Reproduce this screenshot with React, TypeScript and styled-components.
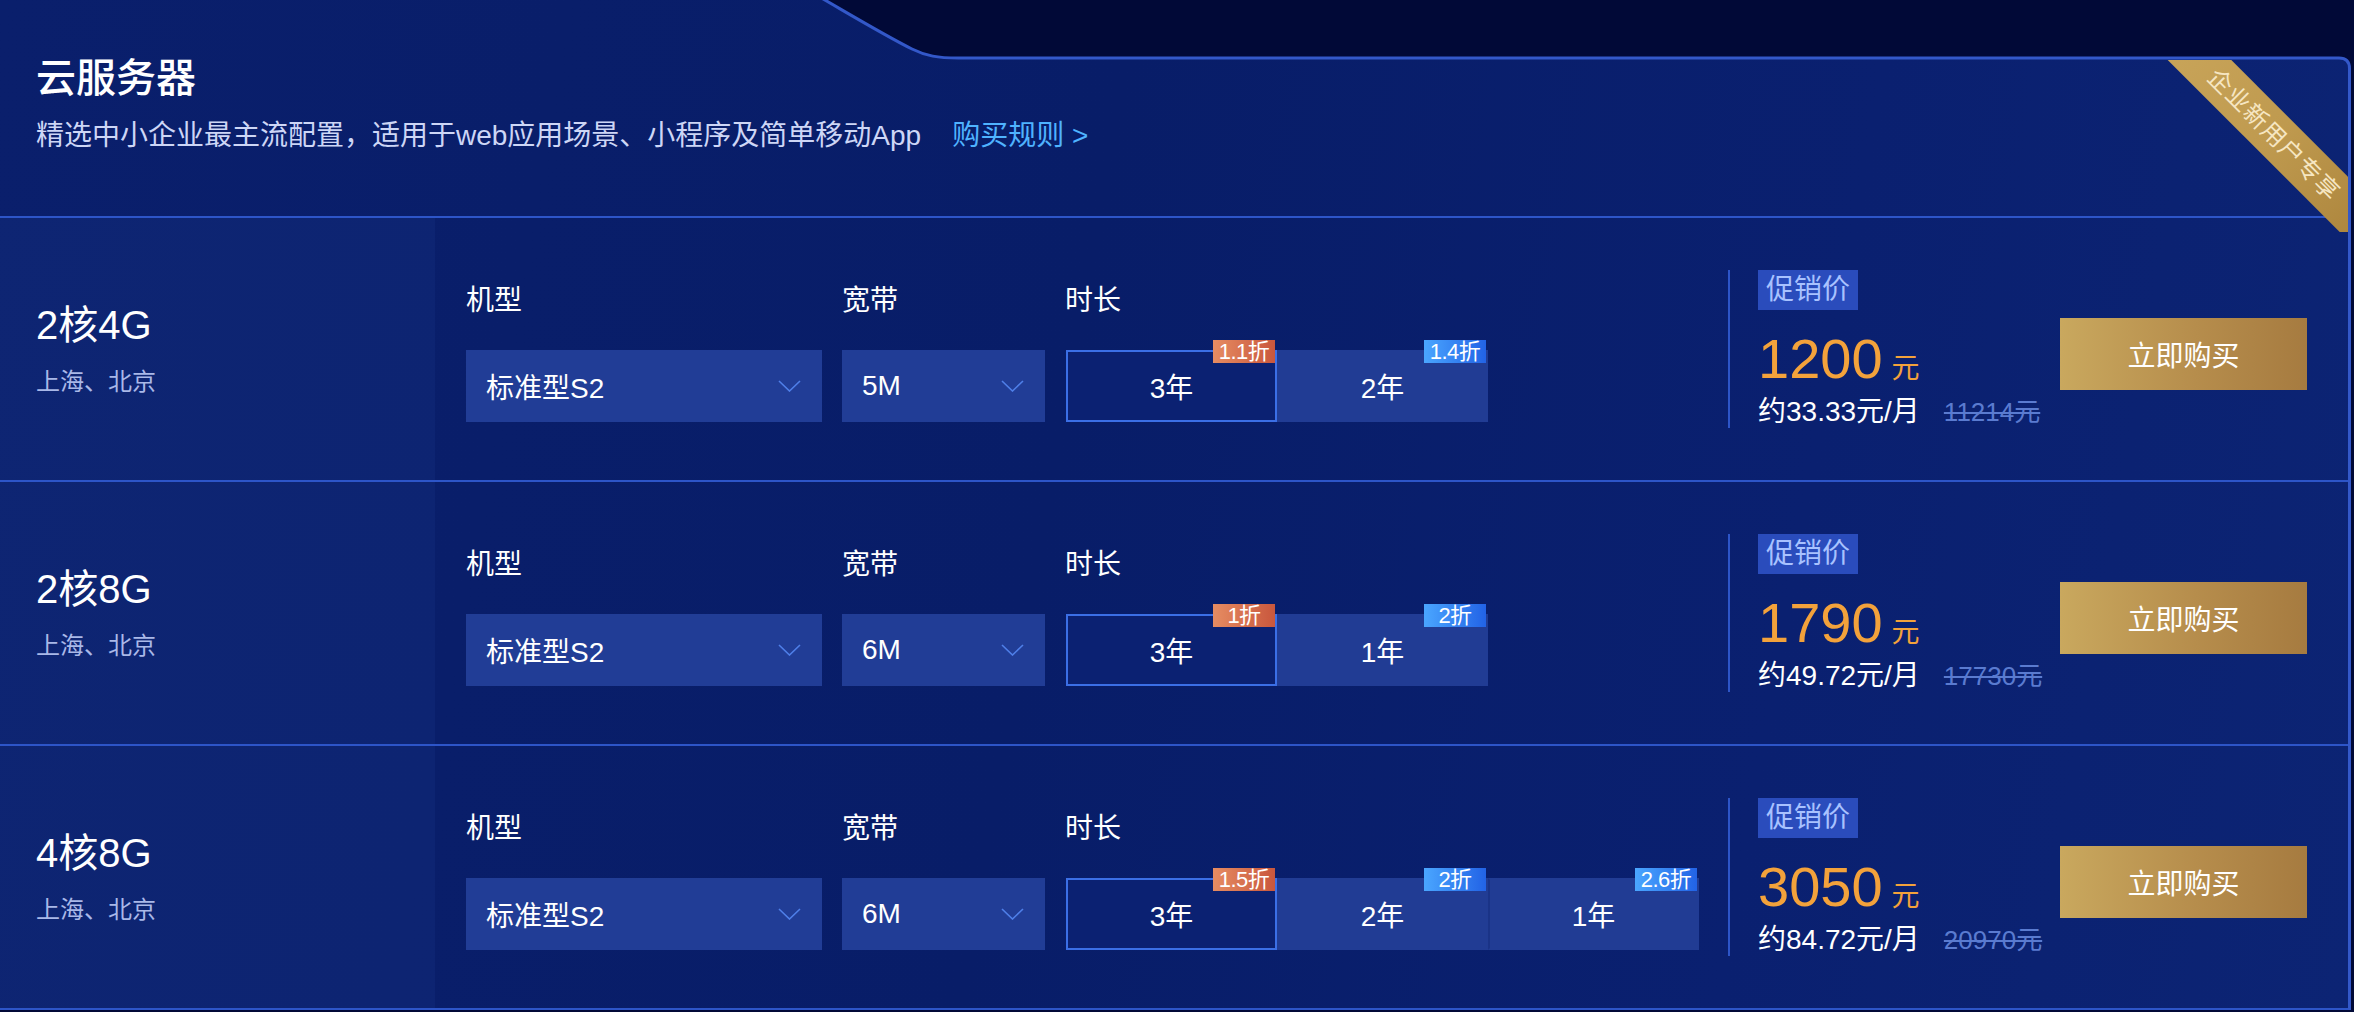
import React from "react";
import styled, { createGlobalStyle } from "styled-components";

const GlobalStyle = createGlobalStyle`
  html, body { margin: 0; padding: 0; background: #010937; }
  body { font-family: "Liberation Sans", "Noto Sans CJK SC", sans-serif; color: #fff; }
  * { box-sizing: border-box; }
`;

const Page = styled.div`
  position: relative;
  width: 2354px;
  height: 1012px;
  background: #010937;
  overflow: hidden;
`;

const Panel = styled.section`
  position: relative;
  width: 2351px;
  border-right: 3px solid #3358c9;
  background: linear-gradient(100deg, #0a1f6c 0%, #081d68 45%, #0a2070 75%, #0c2474 100%);
`;

const Notch = styled.svg`
  position: absolute;
  left: 0;
  top: 0;
  z-index: 3;
  pointer-events: none;
`;

const Header = styled.header`
  height: 218px;
  padding: 54px 0 0 36px;
  border-bottom: 2px solid #2d55c8;
`;

const Title = styled.h1`
  margin: 0;
  font-size: 40px;
  line-height: 48px;
  font-weight: 500;
  color: #ffffff;
`;

const Subtitle = styled.p`
  margin: 16px 0 0;
  font-size: 28px;
  line-height: 36px;
  color: #cdd6f6;
`;

const RuleLink = styled.a`
  margin-left: 31px;
  color: #4fb3ff;
  text-decoration: none;
`;

const RibbonClip = styled.div`
  position: absolute;
  top: 60px;
  right: 0;
  width: 200px;
  height: 172px;
  overflow: hidden;
  z-index: 2;
  pointer-events: none;
`;

const RibbonBand = styled.div`
  position: absolute;
  left: -34px;
  top: 52px;
  width: 320px;
  height: 45px;
  transform: rotate(45deg);
  background: linear-gradient(90deg, #caa65b 0%, #bf9a4f 50%, #a98139 100%);
  display: flex;
  align-items: center;
  justify-content: center;
  font-size: 24px;
  letter-spacing: 1px;
  color: #f6e6c2;
  line-height: 45px;
`;

const Row = styled.div`
  display: grid;
  grid-template-columns: 435px 1293px 1fr;
  height: 264px;
  border-bottom: 2px solid #2d55c8;
`;

const NameCol = styled.div`
  background: rgba(20, 45, 125, 0.45);
  padding: 83px 0 0 36px;
`;

const SpecName = styled.div`
  font-size: 40px;
  line-height: 48px;
  color: #ffffff;
`;

const Region = styled.div`
  margin-top: 17px;
  font-size: 24px;
  line-height: 32px;
  color: #a9b8e8;
`;

const ConfigCol = styled.div`
  display: flex;
  gap: 20px;
  padding: 63px 0 0 31px;
`;

const Field = styled.div<{ $w?: number }>`
  display: flex;
  flex-direction: column;
  width: ${(p) => (p.$w ? `${p.$w}px` : "auto")};
`;

const FieldLabel = styled.div`
  font-size: 28px;
  line-height: 40px;
  margin-bottom: 29px;
  color: #ffffff;
`;

const SelectBox = styled.div`
  height: 72px;
  display: flex;
  align-items: center;
  justify-content: space-between;
  padding: 0 21px 0 20px;
  background: #213d96;
  font-size: 28px;
  color: #ffffff;
`;

const Chevron = () => (
  <svg width="23" height="12" viewBox="0 0 23 12" fill="none">
    <polyline points="1,1 11.5,11 22,1" stroke="#4f7fe8" strokeWidth="1.6" />
  </svg>
);

const DurationGroup = styled.div`
  display: flex;
  margin-left: 1px;
`;

const DurationBox = styled.div<{ $selected?: boolean; $divider?: boolean }>`
  position: relative;
  width: 211px;
  height: 72px;
  display: flex;
  align-items: center;
  justify-content: center;
  font-size: 28px;
  color: #ffffff;
  border: 2px solid ${(p) => (p.$selected ? "#3b6fe6" : "transparent")};
  border-left-color: ${(p) => (p.$selected ? "#3b6fe6" : p.$divider ? "#1a3387" : "transparent")};
  background: ${(p) => (p.$selected ? "#0b2172" : "#213c94")};
`;

const Discount = styled.span<{ $tone: "orange" | "blue" }>`
  position: absolute;
  top: -12px;
  right: 0;
  width: 62px;
  height: 23px;
  line-height: 23px;
  text-align: center;
  font-size: 22px;
  letter-spacing: -0.5px;
  color: #ffffff;
  background: ${(p) =>
    p.$tone === "orange"
      ? "linear-gradient(90deg, #e68c62 0%, #c9573d 100%)"
      : "linear-gradient(90deg, #4aa6ff 0%, #2263e6 100%)"};
`;

const PriceCol = styled.div`
  display: flex;
  align-items: flex-start;
`;

const PriceInfo = styled.div`
  width: 332px;
  height: 158px;
  margin-top: 52px;
  padding-left: 28px;
  border-left: 2px solid #2d55c8;
  display: flex;
  flex-direction: column;
  align-items: flex-start;
`;

const PromoTag = styled.span`
  height: 40px;
  padding: 0 8px;
  line-height: 40px;
  font-size: 28px;
  background: #2a4cbc;
  color: #a8c2ff;
`;

const PriceLine = styled.div`
  margin-top: 19px;
  height: 60px;
  line-height: 60px;
  white-space: nowrap;
  color: #f3a23b;
`;

const Amount = styled.span`
  font-size: 56px;
`;

const Unit = styled.span`
  font-size: 28px;
  margin-left: 9px;
`;

const MonthLine = styled.div`
  margin-top: 5px;
  line-height: 36px;
  font-size: 28px;
  white-space: nowrap;
  color: #ffffff;
`;

const OrigPrice = styled.s`
  margin-left: 24px;
  font-size: 26px;
  color: #5a7bd0;
`;

const BuyButton = styled.button`
  width: 247px;
  height: 72px;
  margin-top: 100px;
  border: none;
  padding: 0;
  font-family: inherit;
  font-size: 28px;
  color: #ffffff;
  background: linear-gradient(90deg, #c9a85e 0%, #b68d4c 55%, #a67b40 100%);
  cursor: pointer;
`;

type Tone = "orange" | "blue";
type Duration = { label: string; badge: string; tone: Tone; selected?: boolean };
type Plan = {
  name: string;
  bandwidth: string;
  durations: Duration[];
  price: string;
  month: string;
  orig: string;
};

const plans: Plan[] = [
  {
    name: "2核4G",
    bandwidth: "5M",
    durations: [
      { label: "3年", badge: "1.1折", tone: "orange", selected: true },
      { label: "2年", badge: "1.4折", tone: "blue" },
    ],
    price: "1200",
    month: "约33.33元/月",
    orig: "11214元",
  },
  {
    name: "2核8G",
    bandwidth: "6M",
    durations: [
      { label: "3年", badge: "1折", tone: "orange", selected: true },
      { label: "1年", badge: "2折", tone: "blue" },
    ],
    price: "1790",
    month: "约49.72元/月",
    orig: "17730元",
  },
  {
    name: "4核8G",
    bandwidth: "6M",
    durations: [
      { label: "3年", badge: "1.5折", tone: "orange", selected: true },
      { label: "2年", badge: "2折", tone: "blue" },
      { label: "1年", badge: "2.6折", tone: "blue" },
    ],
    price: "3050",
    month: "约84.72元/月",
    orig: "20970元",
  },
];

export default function App() {
  return (
    <>
      <GlobalStyle />
      <Page>
        <Panel>
          <Header>
            <Title>云服务器</Title>
            <Subtitle>
              精选中小企业最主流配置，适用于web应用场景、小程序及简单移动App
              <RuleLink href="#">购买规则 &gt;</RuleLink>
            </Subtitle>
          </Header>
          <RibbonClip>
            <RibbonBand>企业新用户专享</RibbonBand>
          </RibbonClip>
          {plans.map((plan) => (
            <Row key={plan.name}>
              <NameCol>
                <SpecName>{plan.name}</SpecName>
                <Region>上海、北京</Region>
              </NameCol>
              <ConfigCol>
                <Field $w={356}>
                  <FieldLabel>机型</FieldLabel>
                  <SelectBox>
                    <span>标准型S2</span>
                    <Chevron />
                  </SelectBox>
                </Field>
                <Field $w={203}>
                  <FieldLabel>宽带</FieldLabel>
                  <SelectBox>
                    <span>{plan.bandwidth}</span>
                    <Chevron />
                  </SelectBox>
                </Field>
                <Field>
                  <FieldLabel>时长</FieldLabel>
                  <DurationGroup>
                    {plan.durations.map((d, i) => (
                      <DurationBox
                        key={d.label}
                        $selected={d.selected}
                        $divider={i > 0 && !plan.durations[i - 1].selected}
                      >
                        {d.label}
                        <Discount $tone={d.tone}>{d.badge}</Discount>
                      </DurationBox>
                    ))}
                  </DurationGroup>
                </Field>
              </ConfigCol>
              <PriceCol>
                <PriceInfo>
                  <PromoTag>促销价</PromoTag>
                  <PriceLine>
                    <Amount>{plan.price}</Amount>
                    <Unit>元</Unit>
                  </PriceLine>
                  <MonthLine>
                    {plan.month}
                    <OrigPrice>{plan.orig}</OrigPrice>
                  </MonthLine>
                </PriceInfo>
                <BuyButton>立即购买</BuyButton>
              </PriceCol>
            </Row>
          ))}
        </Panel>
        <Notch width="2354" height="80" viewBox="0 0 2354 80">
          <path
            d="M 818 -4 C 856 18, 886 36, 912 49 C 926 56, 938 58, 958 58 L 2339 58 Q 2349.5 58 2349.5 68.5 L 2349.5 80 L 2354 80 L 2354 -4 Z"
            fill="#010937"
          />
          <path
            d="M 818 -4 C 856 18, 886 36, 912 49 C 926 56, 938 58, 958 58 L 2339 58 Q 2349.5 58 2349.5 68.5 L 2349.5 80"
            fill="none"
            stroke="#3358c9"
            strokeWidth="3"
          />
        </Notch>
      </Page>
    </>
  );
}
